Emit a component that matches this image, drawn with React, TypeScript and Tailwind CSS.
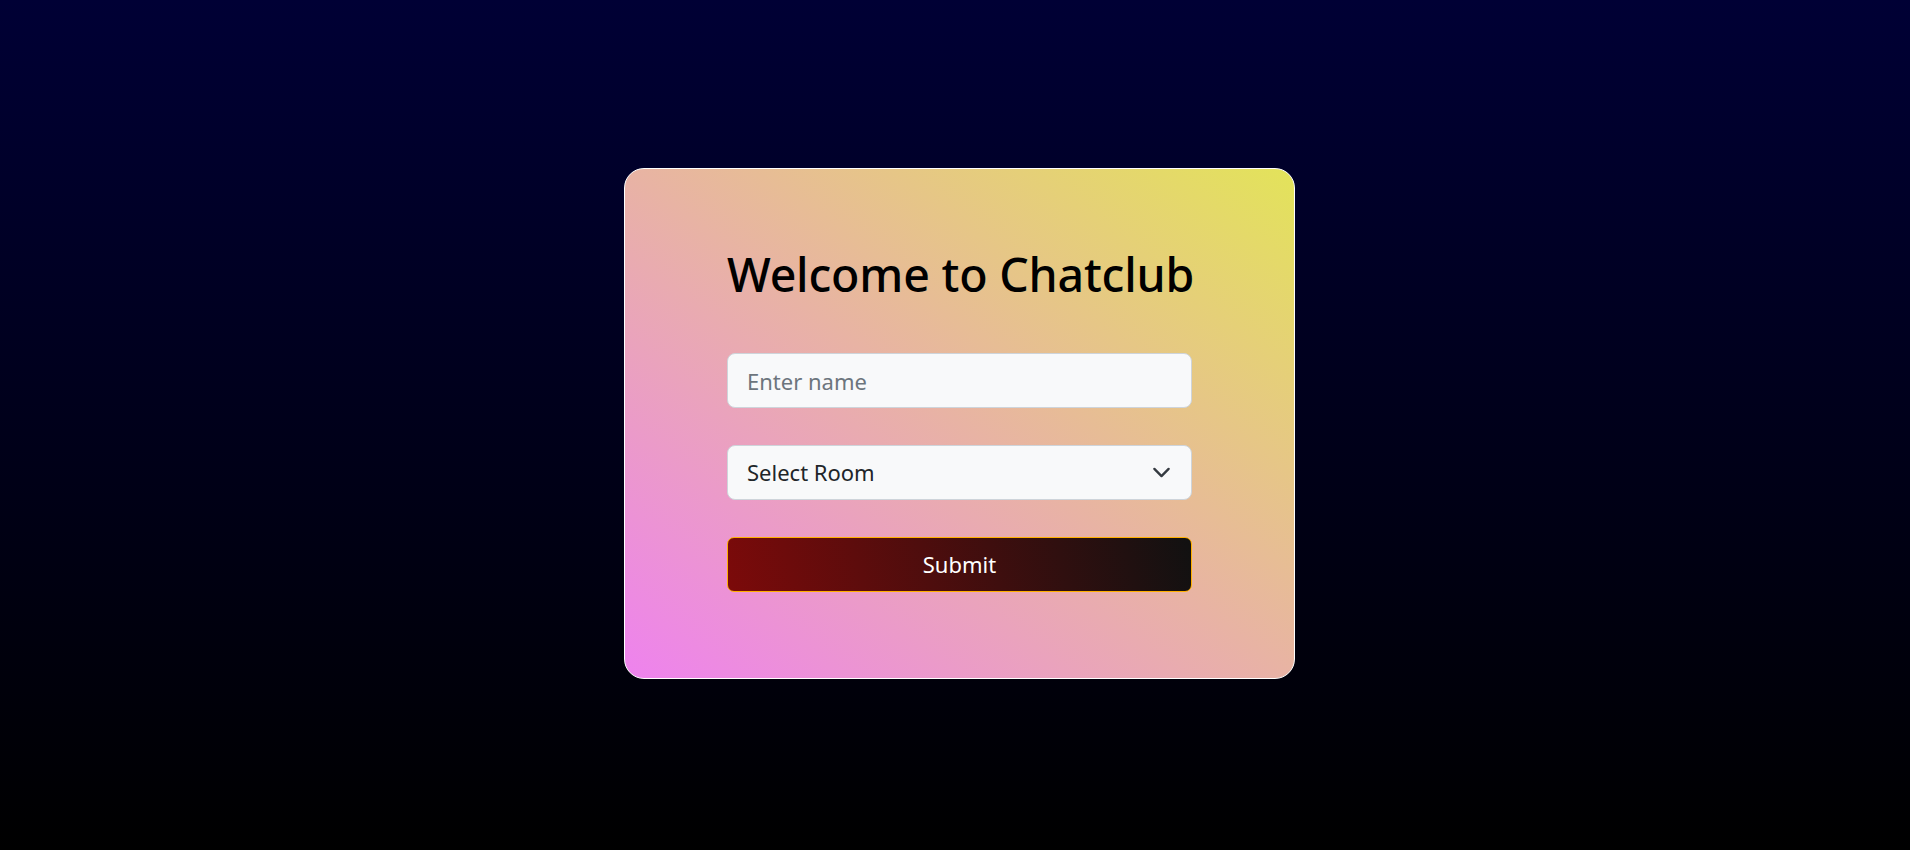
import React from "react";

export default function App() {
  return (
    <div className="w-full h-[850px] flex items-center justify-center pl-[9px] pb-[3px] bg-[linear-gradient(to_bottom,#000035,#000000)] font-['Noto_Sans',sans-serif]">
      <div className="w-[671px] h-[511px] rounded-[20px] border border-white bg-[linear-gradient(to_top_right,#ee82ee,#e8b3a4_50%,#e3e35a)] flex flex-col items-center pt-[77px]">
        <div className="w-[465px] flex flex-col">
          <h1 className="text-[46.5px] leading-[56px] font-medium text-black text-center tracking-[-0.2px] whitespace-nowrap">
            Welcome to Chatclub
          </h1>
          <input
            type="text"
            placeholder="Enter name"
            className="mt-[51px] h-[55px] w-full rounded-[8px] border border-[#ced4da] bg-[#f8f9fa] px-[19px] text-[22px] text-[#212529] placeholder:text-[#6c757d] outline-none"
          />
          <div className="relative mt-[37px] h-[55px] w-full">
            <select
              defaultValue=""
              className="h-full w-full appearance-none rounded-[8px] border border-[#ced4da] bg-[#f8f9fa] px-[19px] text-[22px] text-[#212529] outline-none"
            >
              <option value="" disabled>
                Select Room
              </option>
            </select>
            <svg
              className="pointer-events-none absolute right-[21px] top-[18px] h-[19px] w-[19px]"
              viewBox="0 0 16 16"
              fill="none"
              stroke="#343a40"
              strokeWidth="2"
              strokeLinecap="round"
              strokeLinejoin="round"
            >
              <path d="m2 5 6 6 6-6" />
            </svg>
          </div>
          <button className="mt-[37px] h-[55px] w-full rounded-[7px] border border-[#ffb000] bg-[linear-gradient(75deg,#7c0a0a,#111111)] text-[22px] text-white">
            Submit
          </button>
        </div>
      </div>
    </div>
  );
}
